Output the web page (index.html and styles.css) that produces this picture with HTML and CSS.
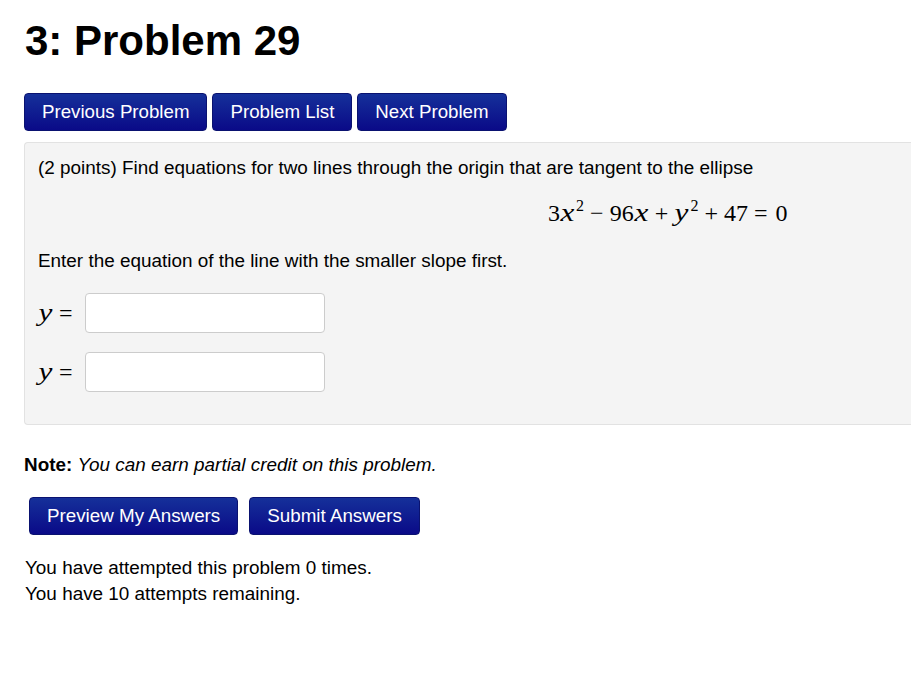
FILE: index.html
```html
<!DOCTYPE html>
<html>
<head>
<meta charset="utf-8">
<link rel="stylesheet" href="styles.css">
</head>
<body>
<div class="page">
  <h1 class="title">3: Problem 29</h1>
  <div class="nav">
    <button class="btn">Previous Problem</button>
    <button class="btn">Problem List</button>
    <button class="btn">Next Problem</button>
  </div>
  <div class="problem">
    <p class="line">(2 points) Find equations for two lines through the origin that are tangent to the ellipse</p>
    <div class="display-math"><span class="math"><span class="n">3</span><i>x</i><sup>2</sup><span class="op">&minus;</span><span class="n">96</span><i>x</i><span class="op">+</span><i>y</i><sup>2</sup><span class="op">+</span><span class="n">47</span><span class="op rel">=</span><span class="n">0</span></span></div>
    <p class="line">Enter the equation of the line with the smaller slope first.</p>
    <div class="answer"><span class="math label"><i>y</i><span class="op rel">=</span></span><input class="field" type="text"></div>
    <div class="answer"><span class="math label"><i>y</i><span class="op rel">=</span></span><input class="field" type="text"></div>
  </div>
  <p class="note"><b>Note:</b> <i>You can earn partial credit on this problem.</i></p>
  <div class="submit">
    <button class="btn">Preview My Answers</button>
    <button class="btn">Submit Answers</button>
  </div>
  <p class="attempts">You have attempted this problem 0 times.<br>You have 10 attempts remaining.</p>
</div>
</body>
</html>
```

FILE: styles.css
```css
html, body {
  margin: 0;
  padding: 0;
  overflow-x: hidden;
  background: #fff;
}
body {
  font-family: "Liberation Sans", Arial, sans-serif;
  font-size: 18.9px;
  color: #000;
}
.page {
  padding: 17px 0 0 24px;
}
.title {
  margin: 0;
  font-size: 42px;
  font-weight: bold;
  line-height: 48px;
  padding-left: 1px;
}
.nav {
  display: flex;
  gap: 5px;
  margin-top: 28px;
}
.nav .btn {
  font-size: 18.7px;
}
.btn {
  font-family: "Liberation Sans", Arial, sans-serif;
  font-size: 18.8px;
  color: #fff;
  background: linear-gradient(#15309a, #0a0a88);
  border: 1px solid #0a1270;
  border-radius: 4px;
  height: 38px;
  padding: 0 17px;
  line-height: 36px;
  cursor: pointer;
}
.problem {
  margin-top: 11px;
  background: #f4f4f4;
  border: 1px solid #e2e2e2;
  border-right: none;
  border-radius: 4px 0 0 4px;
  padding: 13px 0 30px 13px;
  box-sizing: border-box;
  height: 283px;
}
.line {
  margin: 0;
  line-height: 24px;
}
.display-math {
  margin: 15px 0 15px 510px;
  line-height: 36px;
  white-space: nowrap;
}
.math {
  font-family: "Liberation Serif", serif;
  font-size: 24px;
}
.math .n {
  font-size: 24px;
}
.math i {
  font-family: "Liberation Serif", serif;
  font-style: italic;
  font-size: 25px;
  display: inline-block;
  transform: scaleX(1.25);
  margin: 0 2px;
}
.math sup {
  font-size: 16px;
  vertical-align: 0;
  position: relative;
  top: -10px;
  margin-left: 1px;
}
.math .op {
  margin: 0 6px;
}
.math .op.rel {
  margin: 0 8px 0 6px;
}
.answer {
  display: flex;
  align-items: center;
  margin-top: 20px;
}
.answer + .answer {
  margin-top: 19px;
}
.label {
  width: 47px;
  white-space: nowrap;
}
.label i {
  margin: 0 1px 0 2px;
}
.label .op.rel {
  margin: 0 0 0 7px;
}
.field {
  width: 240px;
  height: 40px;
  box-sizing: border-box;
  border: 1px solid #cccccc;
  border-radius: 4px;
  background: #fff;
}
.note {
  margin: 28px 0 0 0;
  line-height: 24px;
}
.submit {
  display: flex;
  gap: 11px;
  margin-top: 20px;
  padding-left: 5px;
}
.attempts {
  margin: 20px 0 0 1px;
  line-height: 26px;
}
```
